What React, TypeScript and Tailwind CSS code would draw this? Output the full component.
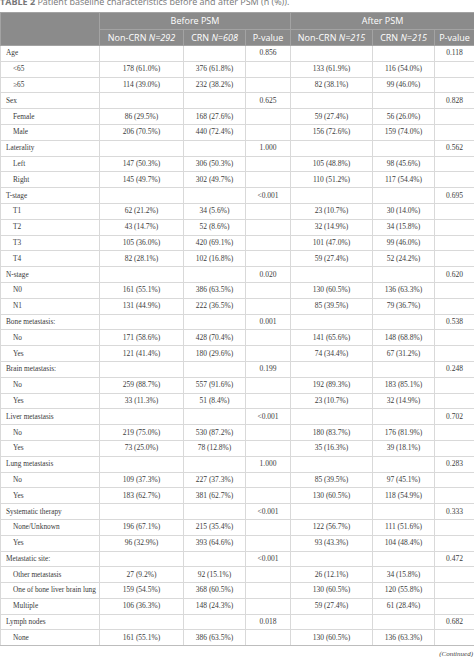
import React from 'react';

type Row = { label: string; sub?: boolean; b1?: string; b2?: string; bp?: string; a1?: string; a2?: string; ap?: string };

const group = (label: string, bp: string, ap: string): Row => ({ label, bp, ap });
const item = (label: string, b1: string, b2: string, a1: string, a2: string): Row => ({ label, sub: true, b1, b2, a1, a2 });

const rows: Row[] = [
  group('Age', '0.856', '0.118'),
  item('<65', '178 (61.0%)', '376 (61.8%)', '133 (61.9%)', '116 (54.0%)'),
  item('≥65', '114 (39.0%)', '232 (38.2%)', '82 (38.1%)', '99 (46.0%)'),
  group('Sex', '0.625', '0.828'),
  item('Female', '86 (29.5%)', '168 (27.6%)', '59 (27.4%)', '56 (26.0%)'),
  item('Male', '206 (70.5%)', '440 (72.4%)', '156 (72.6%)', '159 (74.0%)'),
  group('Laterality', '1.000', '0.562'),
  item('Left', '147 (50.3%)', '306 (50.3%)', '105 (48.8%)', '98 (45.6%)'),
  item('Right', '145 (49.7%)', '302 (49.7%)', '110 (51.2%)', '117 (54.4%)'),
  group('T-stage', '<0.001', '0.695'),
  item('T1', '62 (21.2%)', '34 (5.6%)', '23 (10.7%)', '30 (14.0%)'),
  item('T2', '43 (14.7%)', '52 (8.6%)', '32 (14.9%)', '34 (15.8%)'),
  item('T3', '105 (36.0%)', '420 (69.1%)', '101 (47.0%)', '99 (46.0%)'),
  item('T4', '82 (28.1%)', '102 (16.8%)', '59 (27.4%)', '52 (24.2%)'),
  group('N-stage', '0.020', '0.620'),
  item('N0', '161 (55.1%)', '386 (63.5%)', '130 (60.5%)', '136 (63.3%)'),
  item('N1', '131 (44.9%)', '222 (36.5%)', '85 (39.5%)', '79 (36.7%)'),
  group('Bone metastasis:', '0.001', '0.538'),
  item('No', '171 (58.6%)', '428 (70.4%)', '141 (65.6%)', '148 (68.8%)'),
  item('Yes', '121 (41.4%)', '180 (29.6%)', '74 (34.4%)', '67 (31.2%)'),
  group('Brain metastasis:', '0.199', '0.248'),
  item('No', '259 (88.7%)', '557 (91.6%)', '192 (89.3%)', '183 (85.1%)'),
  item('Yes', '33 (11.3%)', '51 (8.4%)', '23 (10.7%)', '32 (14.9%)'),
  group('Liver metastasis', '<0.001', '0.702'),
  item('No', '219 (75.0%)', '530 (87.2%)', '180 (83.7%)', '176 (81.9%)'),
  item('Yes', '73 (25.0%)', '78 (12.8%)', '35 (16.3%)', '39 (18.1%)'),
  group('Lung metastasis', '1.000', '0.283'),
  item('No', '109 (37.3%)', '227 (37.3%)', '85 (39.5%)', '97 (45.1%)'),
  item('Yes', '183 (62.7%)', '381 (62.7%)', '130 (60.5%)', '118 (54.9%)'),
  group('Systematic therapy', '<0.001', '0.333'),
  item('None/Unknown', '196 (67.1%)', '215 (35.4%)', '122 (56.7%)', '111 (51.6%)'),
  item('Yes', '96 (32.9%)', '393 (64.6%)', '93 (43.3%)', '104 (48.4%)'),
  group('Metastatic site:', '<0.001', '0.472'),
  item('Other metastasis', '27 (9.2%)', '92 (15.1%)', '26 (12.1%)', '34 (15.8%)'),
  item('One of bone liver brain lung', '159 (54.5%)', '368 (60.5%)', '130 (60.5%)', '120 (55.8%)'),
  item('Multiple', '106 (36.3%)', '148 (24.3%)', '59 (27.4%)', '61 (28.4%)'),
  group('Lymph nodes', '0.018', '0.682'),
  item('None', '161 (55.1%)', '386 (63.5%)', '130 (60.5%)', '136 (63.3%)'),
];

const serif = { fontFamily: '"Liberation Serif", serif' };
const sans = { fontFamily: '"Open Sans", sans-serif' };

const cell = 'border border-[#d9d9d9] leading-[10px] text-[#3a3a3a] p-0';
const td = `${cell} text-center text-[7.5px]`;
const th = 'border border-[#a3a3a3] text-white font-normal text-[9px] p-0';

export default function App() {
  return (
    <div className="w-[474px] h-[657px] overflow-hidden bg-white">
      {/* caption, mostly cut off at the top */}
      <div className="h-[12px] overflow-hidden">
        <p className="-mt-[4px] text-[9px] leading-[12px] text-[#777] whitespace-nowrap" style={sans}>
          <span className="font-bold">TABLE 2</span> Patient baseline characteristics before and after PSM (n (%)).
        </p>
      </div>

      <table className="w-[474px] table-fixed border-collapse" style={serif}>
        <colgroup>
          <col className="w-[99px]" />
          <col className="w-[84px]" />
          <col className="w-[62px]" />
          <col className="w-[45px]" />
          <col className="w-[82px]" />
          <col className="w-[62px]" />
          <col className="w-[40px]" />
        </colgroup>
        <thead className="bg-[#8b8b8b]" style={sans}>
          <tr className="h-[17px]">
            <th rowSpan={2} className={th} />
            <th colSpan={3} className={th}>Before PSM</th>
            <th colSpan={3} className={th}>After PSM</th>
          </tr>
          <tr className="h-[16px]">
            <th className={th}>Non-CRN <i>N=292</i></th>
            <th className={th}>CRN <i>N=608</i></th>
            <th className={th}>P-value</th>
            <th className={th}>Non-CRN <i>N=215</i></th>
            <th className={th}>CRN <i>N=215</i></th>
            <th className={th}>P-value</th>
          </tr>
        </thead>
        <tbody>
          {rows.map((r, i) => (
            <tr key={i} className="h-[15.8px]">
              <td className={`${cell} text-left text-[7.3px] whitespace-nowrap ${r.sub ? 'pl-[12px]' : 'pl-[5px]'}`}>{r.label}</td>
              <td className={td}>{r.b1}</td>
              <td className={td}>{r.b2}</td>
              <td className={td}>{r.bp}</td>
              <td className={td}>{r.a1}</td>
              <td className={td}>{r.a2}</td>
              <td className={td}>{r.ap}</td>
            </tr>
          ))}
        </tbody>
      </table>
      <div className="border-t border-[#bdbdbd] -mt-px" />
      <p className="mt-[3px] text-right text-[7px] italic text-[#444] pr-[1px]" style={serif}>(Continued)</p>
    </div>
  );
}
